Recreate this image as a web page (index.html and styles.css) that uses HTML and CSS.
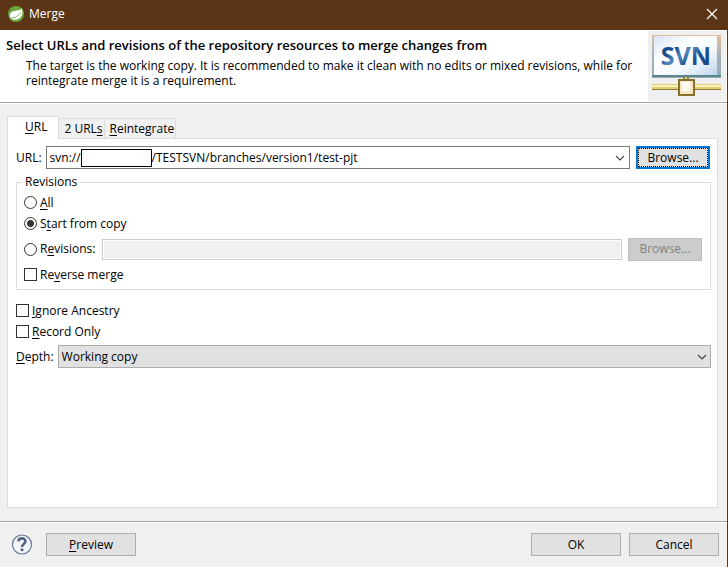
FILE: index.html
```html
<!DOCTYPE html>
<html lang="en">
<head>
    <meta charset="UTF-8">
    <meta name="viewport" content="width=device-width, initial-scale=1.0">
    <title>Merge</title>
    <link rel="stylesheet" href="styles.css">
</head>
<body>

    <div class="dialog">
        <!-- Title Bar -->
        <div class="title-bar">
            <svg class="app-icon" width="16" height="16" viewBox="0 0 16 16" aria-hidden="true">
                <circle cx="8" cy="8" r="8" fill="#68a63c"/>
                <path d="M13.9 2.2C12.8 4.3 11 4.2 8.5 4.4C4.3 4.7 1.9 6.4 1.9 9.4C1.9 11.1 2.7 12.5 4.1 13.2C6.3 14.2 10 14 12.2 11.7C14.7 9.3 14.9 5.3 13.9 2.2Z" fill="#fff"/>
                <path d="M3.2 12.2C7 12 10.8 10 12.7 6.3" fill="none" stroke="#68a63c" stroke-width="0.8"/>
            </svg>
            <span class="title-text">Merge</span>
            <button class="close-button" type="button" aria-label="Close">
                <svg width="12" height="12" viewBox="0 0 12 12">
                    <path d="M1 1L11 11M11 1L1 11" stroke="#fff" stroke-width="1.2"/>
                </svg>
            </button>
        </div>

        <!-- Header -->
        <div class="header">
            <div class="header-text">
                <h1>Select URLs and revisions of the repository resources to merge changes from</h1>
                <p>The target is the working copy. It is recommended to make it clean with no edits or mixed revisions, while for reintegrate merge it is a requirement.</p>
            </div>
            <svg class="banner" width="78" height="70" viewBox="0 0 78 70" role="img" aria-label="SVN">
                <defs>
                    <linearGradient id="frame" x1="0" y1="0" x2="0" y2="1">
                        <stop offset="0" stop-color="#e3bf98"/>
                        <stop offset="0.5" stop-color="#a5b0b8"/>
                        <stop offset="1" stop-color="#8fb0b8"/>
                    </linearGradient>
                    <linearGradient id="screen" x1="0" y1="0" x2="1" y2="1">
                        <stop offset="0" stop-color="#d5e3f5"/>
                        <stop offset="0.35" stop-color="#ffffff"/>
                        <stop offset="0.65" stop-color="#f3f8fd"/>
                        <stop offset="1" stop-color="#bdd4ee"/>
                    </linearGradient>
                    <linearGradient id="letters" x1="0" y1="0" x2="1" y2="1">
                        <stop offset="0" stop-color="#174a8a"/>
                        <stop offset="0.3" stop-color="#1b4f8f"/>
                        <stop offset="0.45" stop-color="#5487bd"/>
                        <stop offset="0.65" stop-color="#1b4f8f"/>
                        <stop offset="1" stop-color="#164581"/>
                    </linearGradient>
                </defs>
                <rect width="78" height="70" fill="#efefef"/>
                <rect x="4" y="4" width="69" height="43" fill="url(#frame)"/>
                <rect x="6" y="5" width="63" height="39" fill="url(#screen)"/>
                <rect x="4" y="44" width="69" height="2" fill="#5c858c"/>
                <text class="banner-text" x="38" y="34" text-anchor="middle" fill="url(#letters)">SVN</text>
                <rect x="4" y="53" width="69" height="6" fill="#ddcf78"/>
                <rect x="4" y="54" width="69" height="2" fill="#f8f0b8"/>
                <rect x="4" y="58" width="69" height="1" fill="#8e7a30"/>
                <rect x="35" y="46" width="6" height="4" fill="#8b8445"/>
                <rect x="37" y="46" width="2" height="3" fill="#d9cc80"/>
                <rect x="31" y="49" width="15" height="15" fill="#fae7c8" stroke="#85712b" stroke-width="2"/>
                <rect x="34" y="51" width="8" height="9" fill="#fffaf0"/>
            </svg>
        </div>

        <!-- Tabs -->
        <div class="content">
            <div class="tabs" role="tablist">
                <button class="tab active" type="button" role="tab" aria-selected="true"><u>U</u>RL</button>
                <button class="tab" type="button" role="tab" aria-selected="false">2 URL<u>s</u></button>
                <button class="tab" type="button" role="tab" aria-selected="false"><u>R</u>eintegrate</button>
            </div>

            <div class="panel" role="tabpanel">
                <div class="row url-row">
                    <label for="url">URL:</label>
                    <div class="combo">
                        <span>svn://</span>
                        <span class="host"></span>
                        <input type="text" id="url" value="/TESTSVN/branches/version1/test-pjt">
                        <button class="combo-arrow" type="button" aria-label="Show recent URLs">
                            <svg width="10" height="6" viewBox="0 0 10 6">
                                <path d="M1 1L5 5L9 1" fill="none" stroke="#444" stroke-width="1.2"/>
                            </svg>
                        </button>
                    </div>
                    <button class="button browse focused" type="button">Browse...</button>
                </div>

                <fieldset class="revisions">
                    <legend>Revisions</legend>
                    <div class="row option">
                        <input type="radio" id="all" name="revisions">
                        <label for="all"><u>A</u>ll</label>
                    </div>
                    <div class="row option">
                        <input type="radio" id="startFromCopy" name="revisions" checked>
                        <label for="startFromCopy">S<u>t</u>art from copy</label>
                    </div>
                    <div class="row option revision-range">
                        <input type="radio" id="revisionRange" name="revisions">
                        <label for="revisionRange">R<u>e</u>visions:</label>
                        <input type="text" class="range-input" aria-label="Revision range" disabled>
                        <button class="button browse" type="button" disabled>Browse...</button>
                    </div>
                    <div class="row option">
                        <input type="checkbox" id="reverseMerge">
                        <label for="reverseMerge">Re<u>v</u>erse merge</label>
                    </div>
                </fieldset>

                <div class="row option">
                    <input type="checkbox" id="ignoreAncestry">
                    <label for="ignoreAncestry"><u>I</u>gnore Ancestry</label>
                </div>
                <div class="row option">
                    <input type="checkbox" id="recordOnly">
                    <label for="recordOnly"><u>R</u>ecord Only</label>
                </div>
                <div class="row depth-row">
                    <label for="depth"><u>D</u>epth:</label>
                    <div class="select-box">
                        <select id="depth">
                            <option>Working copy</option>
                        </select>
                        <svg class="select-arrow" width="10" height="6" viewBox="0 0 10 6" aria-hidden="true">
                            <path d="M1 1L5 5L9 1" fill="none" stroke="#444" stroke-width="1.2"/>
                        </svg>
                    </div>
                </div>
            </div>
        </div>

        <!-- Footer Buttons -->
        <div class="footer">
            <button class="help-button" type="button" aria-label="Help">
                <svg width="22" height="22" viewBox="0 0 22 22">
                    <circle cx="11" cy="10.5" r="9.5" fill="#f4f5f8" stroke="#65779a" stroke-width="1.2"/>
                    <path d="M7.4 7.4C7.7 3.4 14.6 3.4 14.4 7.4C14.3 10 11 9.9 11 13" fill="none" stroke="#52648c" stroke-width="2.6"/>
                    <circle cx="11" cy="15.8" r="1.5" fill="#52648c"/>
                </svg>
            </button>
            <button class="button wide" type="button"><u>P</u>review</button>
            <div class="spacer"></div>
            <button class="button wide" type="button">OK</button>
            <button class="button wide" type="button">Cancel</button>
        </div>
    </div>

</body>
</html>
```
FILE: styles.css
```css
* {
    box-sizing: border-box;
}

body {
    margin: 0;
    font-family: "Open Sans", "Noto Sans", sans-serif;
    font-size: 12px;
    line-height: 16px;
    color: #000;
    background-color: #f0f0f0;
}

button, input, select {
    font: inherit;
    color: inherit;
    margin: 0;
}

u {
    text-decoration: underline;
    text-underline-offset: 2px;
    text-decoration-skip-ink: none;
}

.dialog {
    display: flex;
    flex-direction: column;
    min-height: 100vh;
    border-right: 1px solid #5c3517;
}

/* Title bar */
.title-bar {
    display: flex;
    align-items: center;
    gap: 5px;
    height: 30px;
    padding: 0 9px 2px 8px;
    background-color: #5c3517;
    color: #fff;
}

.title-text {
    flex: 1;
}

.close-button {
    display: flex;
    padding: 0;
    border: none;
    background: none;
}

/* Header */
.header {
    display: flex;
    justify-content: space-between;
    padding: 1px 1px 1px 6px;
    background-color: #fff;
    border-bottom: 1px solid #a0a0a0;
}

.header-text {
    padding-top: 6px;
}

h1 {
    margin: 0;
    font-size: 13px;
    font-weight: 600;
    line-height: 16px;
}

p {
    margin: 5px 0 0;
    padding-left: 20px;
    line-height: 15px;
}

.banner {
    flex: none;
}

.banner-text {
    font-family: "Open Sans", sans-serif;
    font-size: 25px;
    font-weight: 700;
}

/* Tabs */
.content {
    flex: 1;
    display: flex;
    flex-direction: column;
    padding: 12px 9px 13px 7px;
    border-top: 1px solid #fff;
}

.tabs {
    display: flex;
    align-items: flex-end;
}

.tab {
    height: 20px;
    padding: 0 1px 0 5px;
    border: 1px solid #dcdcdc;
    border-left: none;
    border-bottom: none;
    background-color: #f0f0f0;
}

.tab.active {
    height: 23px;
    margin-bottom: -1px;
    padding: 0 11px 2px 17px;
    border-left: 1px solid #dcdcdc;
    background-color: #fff;
    z-index: 1;
}

.panel {
    flex: 1;
    padding: 7px 6px 8px 8px;
    border: 1px solid #dcdcdc;
    background-color: #fff;
}

.row {
    display: flex;
    align-items: center;
}

.url-row {
    gap: 4px;
}

.combo {
    flex: 1;
    display: flex;
    align-items: center;
    height: 23px;
    padding: 0 4px 0 3px;
    border: 1px solid #7a7a7a;
    background-color: #fff;
}

.combo input {
    flex: 1;
    min-width: 0;
    padding: 0;
    border: none;
    outline: none;
}

.host {
    width: 71px;
    height: 18px;
    border: 1px solid #000;
}

.combo-arrow {
    display: flex;
    padding: 0;
    border: none;
    background: none;
}

/* Buttons */
.button {
    height: 23px;
    padding: 0;
    border: 1px solid #adadad;
    background-color: #e1e1e1;
}

.button:disabled {
    border-color: #bfbfbf;
    background-color: #ccc;
    color: #838383;
}

.browse {
    width: 74px;
}

.wide {
    width: 90px;
}

.focused {
    margin: 0 1px 0 2px;
    border: 2px solid #0078d7;
    outline: 1px dotted #000;
    outline-offset: -3px;
}

/* Revisions group */
.revisions {
    margin: 4px 0 10px;
    padding: 1px 8px 4px 7px;
    border: 1px solid #dcdcdc;
}

legend {
    margin-left: -1px;
    padding: 0 2px;
    line-height: 18px;
}

.option {
    min-height: 21px;
    gap: 3px;
}

.revision-range {
    min-height: 30px;
}

.range-input {
    flex: 1;
    min-width: 0;
    height: 21px;
    margin: 0 3px 0 4px;
    padding: 0 3px;
    border: 1px solid #ccc;
    background-color: #f0f0f0;
    box-shadow: inset 0 0 0 1px #fff;
}

input[type="radio"], input[type="checkbox"] {
    appearance: none;
    flex: none;
    width: 13px;
    height: 13px;
    border: 1px solid #333;
    background-color: #fff;
}

input[type="radio"] {
    border-radius: 50%;
}

input[type="radio"]:checked {
    background-image: radial-gradient(circle, #333 3px, transparent 4px);
}

/* Depth */
.depth-row {
    gap: 4px;
    margin-top: 3px;
}

.select-box {
    flex: 1;
    position: relative;
}

select {
    appearance: none;
    display: block;
    width: 100%;
    height: 23px;
    padding: 0 20px 0 3px;
    border: 1px solid #adadad;
    border-radius: 0;
    background-color: #e1e1e1;
}

.select-arrow {
    position: absolute;
    right: 4px;
    top: 9px;
    pointer-events: none;
}

/* Footer */
.footer {
    display: flex;
    align-items: center;
    gap: 8px;
    padding: 11px 8px 11px 11px;
    border-top: 1px solid #a0a0a0;
    box-shadow: inset 0 1px 0 #fff;
}

.help-button {
    display: flex;
    margin-right: 5px;
    padding: 0;
    border: none;
    background: none;
}

.spacer {
    flex: 1;
}
```
